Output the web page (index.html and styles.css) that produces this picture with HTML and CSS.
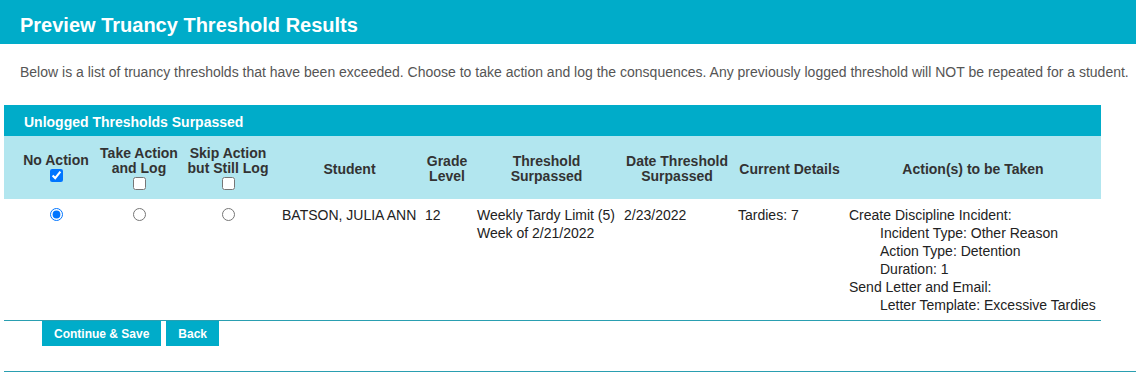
FILE: index.html
```html
<!DOCTYPE html>
<html lang="en">
<head>
    <meta charset="UTF-8">
    <title>Preview Truancy Threshold Results</title>
    <link rel="stylesheet" href="styles.css">
</head>
<body>
    <h1 class="page-title">Preview Truancy Threshold Results</h1>

    <p class="intro">Below is a list of truancy thresholds that have been exceeded. Choose to take action and log the consquences. Any previously logged threshold will NOT be repeated for a student.</p>

    <div class="panel">
        <div class="panel-title">Unlogged Thresholds Surpassed</div>
        <table class="results">
            <colgroup>
                <col style="width: 96px">
                <col style="width: 78px">
                <col style="width: 100px">
                <col style="width: 143px">
                <col style="width: 52px">
                <col style="width: 147px">
                <col style="width: 114px">
                <col style="width: 111px">
                <col>
            </colgroup>
            <thead>
                <tr>
                    <th class="opt first">No Action<br><input type="checkbox" checked></th>
                    <th class="opt">Take Action<br>and Log<br><input type="checkbox"></th>
                    <th class="opt">Skip Action<br>but Still Log<br><input type="checkbox"></th>
                    <th>Student</th>
                    <th>Grade<br>Level</th>
                    <th>Threshold<br>Surpassed</th>
                    <th>Date Threshold<br>Surpassed</th>
                    <th>Current Details</th>
                    <th>Action(s) to be Taken</th>
                </tr>
            </thead>
            <tbody>
                <tr>
                    <td class="opt first"><input type="radio" name="act1" checked></td>
                    <td class="opt"><input type="radio" name="act1"></td>
                    <td class="opt"><input type="radio" name="act1"></td>
                    <td>BATSON, JULIA ANN</td>
                    <td>12</td>
                    <td>Weekly Tardy Limit (5)<br>Week of 2/21/2022</td>
                    <td>2/23/2022</td>
                    <td>Tardies: 7</td>
                    <td>
                        <div>Create Discipline Incident:</div>
                        <div class="sub">Incident Type: Other Reason</div>
                        <div class="sub">Action Type: Detention</div>
                        <div class="sub">Duration: 1</div>
                        <div>Send Letter and Email:</div>
                        <div class="sub">Letter Template: Excessive Tardies</div>
                    </td>
                </tr>
            </tbody>
        </table>
        <div class="buttons">
            <button>Continue &amp; Save</button>
            <button>Back</button>
        </div>
    </div>
    <div class="footer-line"></div>
</body>
</html>
```

FILE: styles.css
```css
body {
    margin: 0;
    font-family: Arial, "Liberation Sans", sans-serif;
    color: #222;
    background: #fff;
}
.page-title {
    margin: 0;
    height: 44px;
    line-height: 50px;
    padding-left: 20px;
    background-color: #00acc9;
    color: #fff;
    font-size: 20px;
    font-weight: bold;
}
.intro {
    margin: 0;
    padding: 19px 0 0 20px;
    height: 42px;
    font-size: 14px;
    line-height: 18px;
    color: #555;
}
.panel {
    margin-left: 4px;
    width: 1097px;
}
.panel-title {
    background-color: #00acc9;
    color: #fff;
    font-size: 14px;
    font-weight: bold;
    height: 31px;
    line-height: 34px;
    padding-left: 20px;
}
.results {
    width: 100%;
    border-collapse: collapse;
    table-layout: fixed;
    border-bottom: 1px solid #2a9fb1;
}
.results thead tr {
    height: 63px;
}
.results th {
    background-color: #b2e6ef;
    color: #333;
    font-size: 14px;
    font-weight: bold;
    line-height: 15px;
    padding: 3px 0 0;
    white-space: nowrap;
    text-align: center;
    vertical-align: middle;
}
.results th input {
    margin: 1px 0 0;
    width: 13px;
    height: 13px;
}
.results td {
    font-size: 14px;
    line-height: 18px;
    padding: 7px 4px 6px;
    vertical-align: top;
    text-align: left;
}
.results td.opt {
    text-align: center;
}
.results td input {
    margin: 2px 0 0;
    width: 13px;
    height: 13px;
}
.results .first {
    padding-left: 12px;
    padding-right: 4px;
}
.sub {
    padding-left: 31px;
}
.buttons {
    display: flex;
    gap: 5px;
    padding-left: 38px;
    height: 50px;
}
button {
    background-color: #00acc9;
    color: #fff;
    border: none;
    font-family: Arial, "Liberation Sans", sans-serif;
    font-size: 12px;
    font-weight: bold;
    height: 25px;
    padding: 0 12px;
    margin: 0;
    cursor: pointer;
}
.footer-line {
    margin-left: 4px;
    border-top: 1px solid #2a9fb1;
}
```
